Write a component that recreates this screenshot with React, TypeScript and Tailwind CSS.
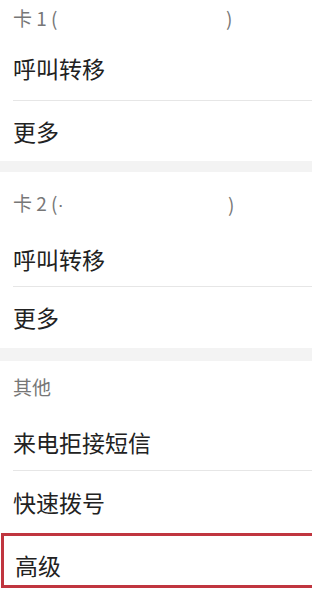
const font = { fontFamily: '"Noto Sans CJK SC", "Noto Sans", sans-serif' };

const Header = ({ label, extra, className, parenAt }: { label: string; extra?: string; className: string; parenAt?: string }) => (
  <div className={`flex items-center pl-[13px] text-[19px] text-[#777777] ${className}`}>
    <span className={`inline-block ${parenAt ?? ''}`}>
      {label}
      {extra && <span className="font-['Liberation_Sans',sans-serif]">{extra}</span>}
    </span>
    {parenAt && <span>)</span>}
  </div>
);

const Item = ({ label, className, divider }: { label: string; className: string; divider?: boolean }) => (
  <div className="flex flex-col">
    <div className={`flex items-center pl-[13px] text-[23px] text-[#222222] ${className}`}>{label}</div>
    {divider && <div className="ml-[13px] h-px bg-[#e6e6e6]" />}
  </div>
);

const Band = ({ className }: { className: string }) => <div className={`bg-[#f3f3f3] ${className}`} />;

export default function App() {
  return (
    <div className="w-[312px] h-[592px] overflow-hidden bg-white" style={font}>
      <Header label="卡 1 (" parenAt="w-[213px]" className="h-[36px]" />
      <Item label="呼叫转移" className="h-[64px]" divider />
      <Item label="更多" className="h-[60px]" />
      <Band className="h-[11px]" />
      <Header label="卡 2 (" extra="·" parenAt="w-[215px]" className="h-[60px] pt-[4px]" />
      <Item label="呼叫转移" className="h-[54px]" divider />
      <Item label="更多" className="h-[61px]" />
      <Band className="h-[13px]" />
      <Header label="其他" className="h-[53px]" />
      <Item label="来电拒接短信" className="h-[56px]" divider />
      <Item label="快速拨号" className="h-[62px]" />
      <div className="ml-px flex h-[55px] items-center border-y-[3px] border-l-[3px] border-[#c0353f] pl-[11px] pt-[10px] text-[23px] text-[#222222]">
        高级
      </div>
    </div>
  );
}
